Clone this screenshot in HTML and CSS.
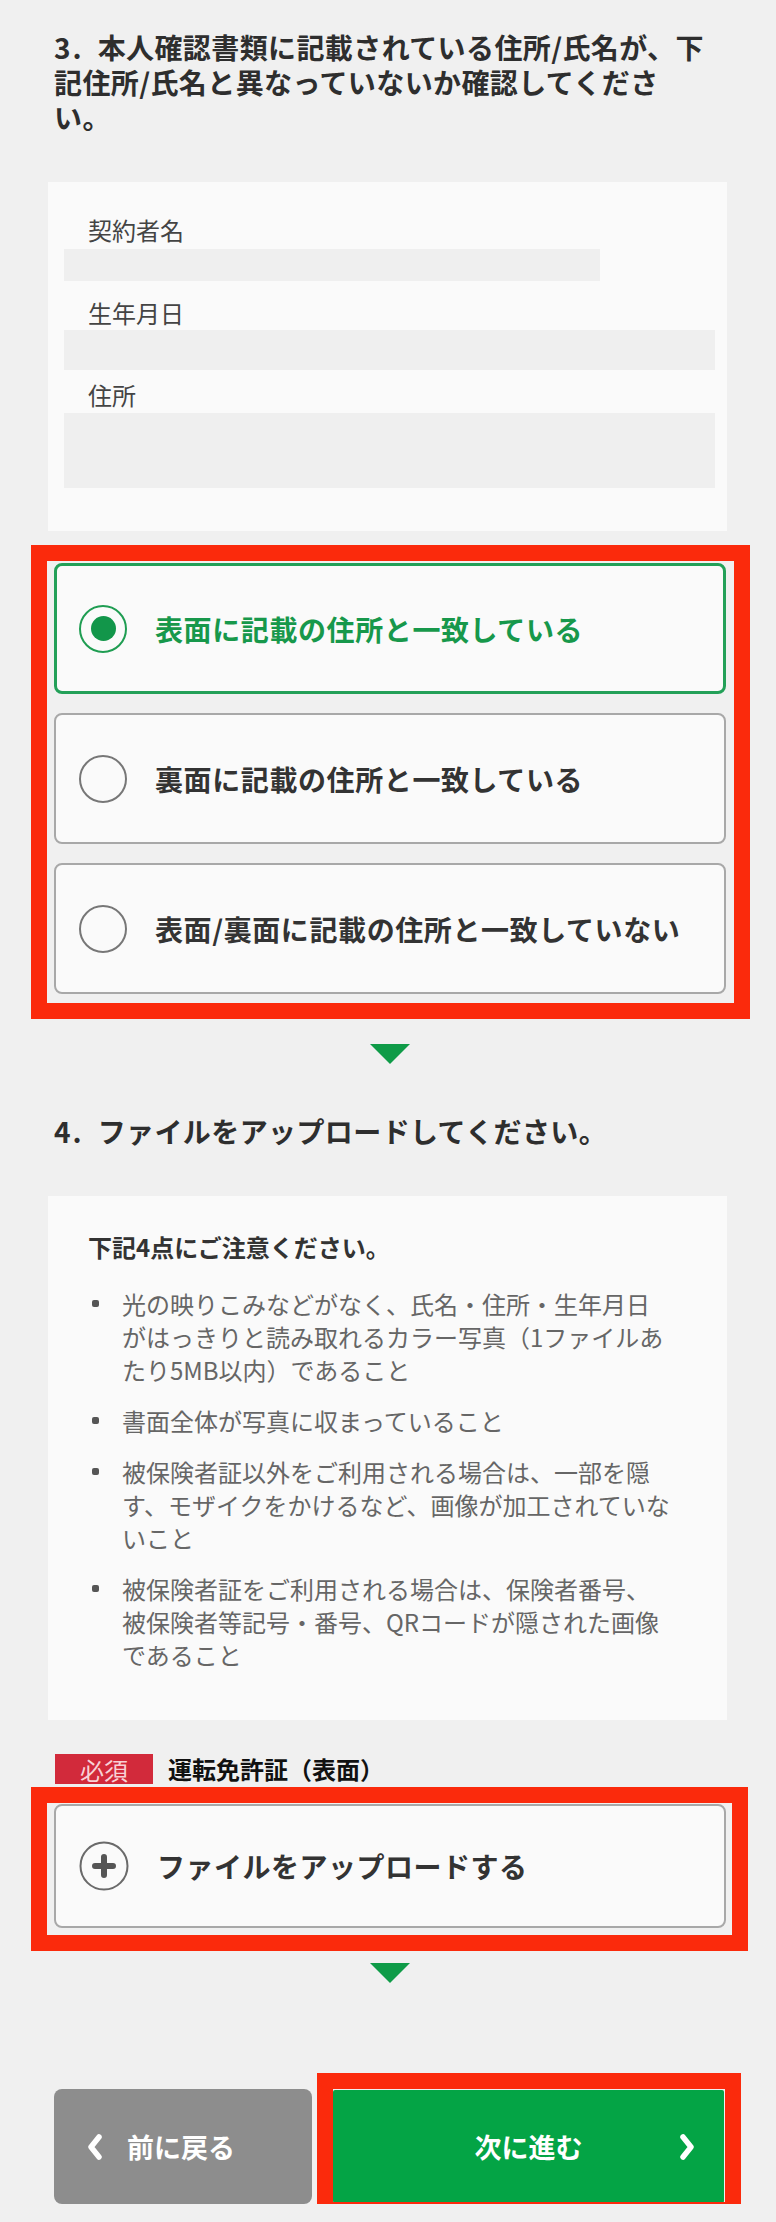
FILE: index.html
```html
<!DOCTYPE html>
<html lang="ja">
<head>
<meta charset="utf-8">
<title>本人確認書類のアップロード</title>
<link rel="stylesheet" href="styles.css">
</head>
<body>
<main class="page">
  <h2 class="step-title"><span class="step-num">3.</span>本人確認書類に記載されている住所/氏名が、下<br>記住所/氏名と異なっていないか確認してくださ<br>い。</h2>

  <section class="card info-card">
    <div class="field-label">契約者名</div>
    <div class="field-value v-name"></div>
    <div class="field-label gap-l">生年月日</div>
    <div class="field-value v-birth"></div>
    <div class="field-label gap-s">住所</div>
    <div class="field-value v-addr"></div>
  </section>

  <div class="options marked">
    <div class="option selected"><span class="radio"></span><span class="option-text">表面に記載の住所と一致している</span></div>
    <div class="option"><span class="radio"></span><span class="option-text">裏面に記載の住所と一致している</span></div>
    <div class="option"><span class="radio"></span><span class="option-text">表面/裏面に記載の住所と一致していない</span></div>
    <div class="mark mark-options"></div>
  </div>

  <div class="arrow-down arrow-1"></div>

  <h2 class="step-title step-4"><span class="step-num">4.</span>ファイルをアップロードしてください。</h2>

  <section class="card notice-card">
    <p class="notice-head">下記4点にご注意ください。</p>
    <ul class="notice-list">
      <li>光の映りこみなどがなく、氏名・住所・生年月日<br>がはっきりと読み取れるカラー写真（1ファイルあ<br>たり5MB以内）であること</li>
      <li>書面全体が写真に収まっていること</li>
      <li>被保険者証以外をご利用される場合は、一部を隠<br>す、モザイクをかけるなど、画像が加工されていな<br>いこと</li>
      <li>被保険者証をご利用される場合は、保険者番号、<br>被保険者等記号・番号、QRコードが隠された画像<br>であること</li>
    </ul>
  </section>

  <div class="doc-label"><span class="badge">必須</span><span class="doc-name">運転免許証（表面）</span></div>

  <div class="upload-wrap marked">
    <div class="upload">
      <svg class="plus-icon" width="50" height="50" viewBox="0 0 50 50" aria-hidden="true">
        <circle cx="25" cy="25" r="23.5" fill="none" stroke="#6a6a6a" stroke-width="2"/>
        <path d="M25 16 V34 M16 25 H34" fill="none" stroke="#555" stroke-width="6" stroke-linecap="round"/>
      </svg>
      <span class="upload-text">ファイルをアップロードする</span>
    </div>
    <div class="mark mark-upload"></div>
  </div>

  <div class="arrow-down arrow-2"></div>

  <div class="nav">
    <div class="btn-back">
      <svg width="16" height="26" viewBox="0 0 16 26" aria-hidden="true"><polyline points="12,3 4,13 12,23" fill="none" stroke="#fff" stroke-width="5.5" stroke-linecap="round" stroke-linejoin="round"/></svg>
      <span class="btn-text back-text">前に戻る</span>
    </div>
    <div class="next-wrap marked">
      <div class="btn-next">
        <span></span>
        <span class="btn-text">次に進む</span>
        <svg class="next-chev" width="16" height="26" viewBox="0 0 16 26" aria-hidden="true"><polyline points="4,3 12,13 4,23" fill="none" stroke="#fff" stroke-width="5.5" stroke-linecap="round" stroke-linejoin="round"/></svg>
      </div>
      <div class="mark mark-next"></div>
    </div>
  </div>
</main>
</body>
</html>
```

FILE: styles.css
```css
* { box-sizing: border-box; }

html, body {
  margin: 0;
  padding: 0;
}

body {
  background: #f0f0f0;
  font-family: "Noto Sans CJK JP", "Noto Sans", sans-serif;
  color: #2e2e2e;
}

.page {
  width: 776px;
  padding: 30px 50px 0 54px;
}

.step-title {
  margin: 0;
  font-size: 28px;
  line-height: 35px;
  font-weight: 700;
  color: #2e2e2e;
  letter-spacing: 0.4px;
}

.step-num {
  margin-right: 14px;
  letter-spacing: 2px;
}

.step-4 {
  margin-top: 50px;
  line-height: 34px;
}

.card {
  background: #fafafa;
  margin-left: -6px;
  margin-right: -1px;
}

/* ---- info card ---- */
.info-card {
  margin-top: 47px;
  padding: 31px 12px 43px 40px;
}

.field-label {
  font-size: 24px;
  line-height: 34px;
  color: #444;
}

.gap-l { margin-top: 15px; }
.gap-s { margin-top: 8px; }

.field-value {
  background: #efefef;
  margin-left: -24px;
}

.v-name { width: 536px; height: 32px; margin-top: 2px; }
.v-birth { height: 40px; }
.v-addr { height: 75px; margin-top: 1px; }

/* ---- options ---- */
.marked { position: relative; }

.options {
  margin-top: 32px;
  display: flex;
  flex-direction: column;
  gap: 19px;
}

.option {
  height: 131px;
  display: flex;
  align-items: center;
  padding-left: 23px;
  background: #fafafa;
  border: 2px solid #a8a8a8;
  border-radius: 8px;
}

.option.selected {
  border: 3px solid #23a058;
  padding-left: 22px;
}

.radio {
  flex: none;
  width: 48px;
  height: 48px;
  border: 2px solid #777;
  border-radius: 50%;
  display: flex;
  align-items: center;
  justify-content: center;
  background: #fafafa;
}

.selected .radio { border-color: #1f9d52; }

.selected .radio::after {
  content: "";
  width: 25px;
  height: 25px;
  border-radius: 50%;
  background: #12964a;
}

.option-text {
  margin-left: 28px;
  font-size: 28px;
  font-weight: 700;
  letter-spacing: 0.6px;
  color: #333;
}

.selected .option-text { color: #17984b; }

.mark {
  position: absolute;
  border: 16px solid #fb2a0c;
  pointer-events: none;
}

.mark-options { top: -18px; bottom: -25px; left: -23px; right: -24px; }

/* ---- arrows ---- */
.arrow-down {
  width: 0;
  height: 0;
  margin: 0 auto;
  border-left: 20px solid transparent;
  border-right: 20px solid transparent;
  border-top: 20px solid #0f9b48;
}

.arrow-1 { margin-top: 50px; }
.arrow-2 { margin-top: 35px; }

/* ---- notice card ---- */
.notice-card {
  margin-top: 48px;
  padding: 33px 12px 49px 40px;
}

.notice-head {
  margin: 0;
  font-size: 24px;
  line-height: 36px;
  font-weight: 700;
  color: #333;
}

.notice-list {
  list-style: none;
  margin: 22px 0 0;
  padding: 0;
}

.notice-list li {
  position: relative;
  padding-left: 34px;
  font-size: 24px;
  line-height: 33px;
  color: #666;
  white-space: nowrap;
}

.notice-list li + li { margin-top: 18px; }

.notice-list li::before {
  content: "";
  position: absolute;
  left: 4px;
  top: 13px;
  width: 7px;
  height: 7px;
  border-radius: 2px;
  background: #555;
}

/* ---- required label ---- */
.doc-label {
  margin-top: 34px;
  height: 30px;
  display: flex;
  align-items: center;
}

.badge {
  width: 98px;
  height: 30px;
  margin-left: 1px;
  background: #d22a3b;
  color: #f8d2d6;
  font-size: 24px;
  line-height: 32px;
  text-align: center;
}

.doc-name {
  margin-left: 15px;
  font-size: 24px;
  line-height: 30px;
  font-weight: 700;
  color: #111;
}

/* ---- upload ---- */
.upload-wrap { margin-top: 20px; }

.upload {
  height: 124px;
  display: flex;
  align-items: center;
  padding-left: 23px;
  background: #fafafa;
  border: 2px solid #a8a8a8;
  border-radius: 8px;
}

.plus-icon { flex: none; }

.upload-text {
  margin-left: 28px;
  font-size: 28px;
  font-weight: 700;
  letter-spacing: 0.5px;
  color: #333;
}

.mark-upload { top: -17px; bottom: -23px; left: -23px; right: -22px; }

/* ---- nav buttons ---- */
.nav {
  margin-top: 106px;
  display: flex;
  align-items: center;
  gap: 21px;
}

.btn-back {
  flex: none;
  width: 258px;
  height: 115px;
  display: flex;
  align-items: center;
  padding-left: 33px;
  background: #8d8d8d;
  border-radius: 8px;
  color: #fff;
}

.btn-text {
  font-size: 27px;
  font-weight: 700;
  color: #fff;
}

.back-text { margin-left: 24px; }

.next-wrap {
  flex: none;
  width: 391px;
}

.btn-next {
  height: 113px;
  display: grid;
  grid-template-columns: 1fr auto 1fr;
  align-items: center;
  background: #04a445;
  border-radius: 2px;
}

.next-chev {
  justify-self: end;
  margin-right: 29px;
}

.mark-next { top: -17px; bottom: -15px; left: -16px; right: -17px; }
```
